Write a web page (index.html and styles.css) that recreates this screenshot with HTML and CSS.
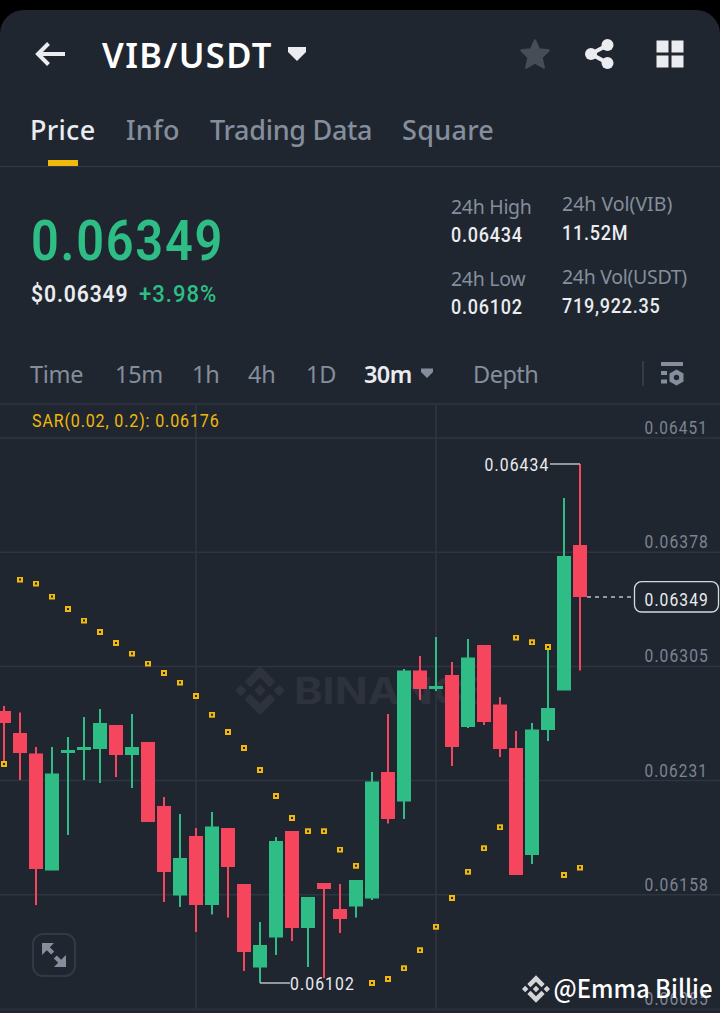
FILE: index.html
```html
<!DOCTYPE html>
<html lang="en">
<head>
<meta charset="utf-8">
<title>VIB/USDT</title>
<link rel="stylesheet" href="styles.css">
</head>
<body>
<main class="screen">
  <header class="topbar">
    <svg class="back" width="32" height="26" viewBox="0 0 32 26"><path d="M31 13H4M14.500 2.500 4 13l10.500 10.500" fill="none" stroke="#eaecef" stroke-width="4"/></svg>
    <h1 class="pair">VIB/USDT</h1>
    <svg class="pair-caret" width="20" height="16" viewBox="0 0 20 16"><path d="M1 1h18v5l-9 9-9-9z" fill="#eaecef"/></svg>
    <div class="actions">
      <svg width="30" height="30" viewBox="0 0 30 30"><path d="M15 1.500 19 10.500 28.500 11.500 21.500 18.500 23.700 28.500 15 23.500 6.300 28.500 8.500 18.500 1.500 11.500 11 10.500Z" fill="#474d57" stroke="#474d57" stroke-width="2.400" stroke-linejoin="round"/></svg>
      <svg width="30" height="32" viewBox="0 0 30 32"><path d="M23.500 7 7 16l16.500 9" fill="none" stroke="#eaecef" stroke-width="4"/><g fill="#eaecef"><circle cx="23.500" cy="7" r="6"/><circle cx="7" cy="16" r="6"/><circle cx="23.500" cy="25" r="6"/></g></svg>
      <svg width="28" height="28" viewBox="0 0 28 28"><path d="M.5.5h12v12H.5zM15.500.5h12v12h-12zM.5 15.500h12v12H.5zM15.500 15.500h12v12h-12z" fill="#eaecef"/></svg>
    </div>
  </header>

  <nav class="tabs">
    <span class="tab tab-price active">Price</span>
    <span class="tab tab-info">Info</span>
    <span class="tab tab-data">Trading Data</span>
    <span class="tab tab-square">Square</span>
  </nav>

  <section class="summary">
    <div class="quote">
      <div class="last">0.06349</div>
      <div class="change"><span class="fiat">$0.06349</span><span class="pct">+3.98%</span></div>
    </div>
    <dl class="stats stats-range">
      <dt class="s-high">24h High</dt><dd>0.06434</dd>
      <dt class="s-low">24h Low</dt><dd>0.06102</dd>
    </dl>
    <dl class="stats stats-volume">
      <dt class="s-vib">24h Vol(VIB)</dt><dd>11.52M</dd>
      <dt class="s-usdt">24h Vol(USDT)</dt><dd>719,922.35</dd>
    </dl>
  </section>

  <nav class="intervals">
    <span class="iv iv-time">Time</span>
    <span class="iv iv-15">15m</span>
    <span class="iv iv-1h">1h</span>
    <span class="iv iv-4h">4h</span>
    <span class="iv iv-1d">1D</span>
    <span class="iv iv-30 selected">30m</span>
    <svg class="iv-caret" width="14" height="11" viewBox="0 0 14 11"><path d="M1 .5h12V4L7 10 1 4z" fill="#848e9c"/></svg>
    <span class="iv iv-depth">Depth</span>
    <svg class="settings" width="24" height="25" viewBox="0 0 24 25"><g fill="#848e9c"><path d="M1 1h22v4H1zM1 10h6v4H1zM1 18.500h6v4H1z"/><path fill-rule="evenodd" d="m16.500 8.500 7 4v8l-7 4-7-4v-8zM16.500 13.800a2.700 2.700 0 1 0 0 5.400 2.700 2.700 0 0 0 0-5.400z"/></g></svg>
  </nav>

  <section class="chart">
    <svg class="plot" width="720" height="610" viewBox="0 403 720 610">
      <defs>
        <marker id="sar" markerUnits="userSpaceOnUse" markerWidth="6" markerHeight="6" refX="3" refY="3"><rect x="1" y="1" width="4" height="4" fill="#202630" stroke="#f0b90b" stroke-width="2"/></marker>
        <g id="diamond"><path d="M0-24.500 15.500-9l-5.700 5.700L0-13.100-9.800-3.300-15.500-9zM0 24.500 15.500 9 9.800 3.300 0 13.100-9.800 3.300-15.500 9zM0-5.700 5.700 0 0 5.700-5.700 0zM-19.300-5.700-13.600 0l-5.700 5.700L-25 0zM19.300-5.700 25 0l-5.700 5.700L13.600 0z"/></g>
      </defs>

      <g fill="#2d323d">
        <use href="#diamond" x="260" y="690.500"/>
        <text class="brand" x="294" y="704" textLength="197" lengthAdjust="spacingAndGlyphs">BINANCE</text>
      </g>

      <path class="grid" d="M0 404H720M196 404V1009M436 404V1009M0 1009.500H720"/>
      <path class="grid thin" d="M0 438H720M0 552.300H720M0 666.500H720M0 780.500H720M0 894.800H720"/>

      <g class="up">
        <path class="wick" d="M52 747V870M68 737V835M84 717V780M100 709V783M132 714V788M180 814V907M212 812V914.500M260 922V983M276 837V955M308 897V967M356 880V917.500M372 772V900M404 669V819M436 637V691M468 639V728M532 723V864M548 648V741M564 498V690"/>
        <path class="body" d="M52 773.500V870.500M68 750V753M84 747V750M100 723V749M132 747V755M180 858V895.500M212 826.500V905M260 945V967.500M276 841V937.500M308 897V928M356 880V906.500M372 781.500V898.500M404 670.500V801.500M436 686V689M468 657.500V727M532 729.500V855M548 708V730M564 556V690.500"/>
      </g>
      <g class="down">
        <path class="wick" d="M4 706V764M20 712.500V780M36 747V905M116 725V777M164 797V902M196 828V932M228 828V917.500M244 884V971M292 831V941M324 883V978M340 884V933M388 714V823.500M420 656V700M452 662V766M484 645V725M500 697V757M516 731V875M580 464V670.500"/>
        <path class="body" d="M4 711V723M20 733V753M36 753.500V869M116 725V755M148 742V822M164 806V872M196 836V905M228 828V867M244 884V952M292 831V928M324 883V889M340 909V919M388 772V819M420 670.500V689M452 675V747M484 645V722M500 704.500V749M516 748V875M580 545V597"/>
      </g>

      <polyline class="sar" points="4,764 20,579.500 36,583.500 52,596.500 68,609 84,620.500 100,632 116,643 132,653.500 148,663.500 164,673 180,682.500 196,696 212,714.700 228,732 244,748 260,770 276,796 292,818 308,831.300 324,831.300 340,849.500 356,865.700 372,983 388,979 404,968.300 420,950.300 436,926.700 452,898 468,871.700 484,848.300 500,827.300 516,637.500 532,642.300 548,647 564,875 580,867.500"/>

      <path d="M550 464H580M260 983H290" stroke="#b7bdc6" stroke-width="1.600"/>
      <path d="M587 597H634" stroke="#b7bdc6" stroke-width="1.500" stroke-dasharray="4 4"/>
      <rect x="634.500" y="581.700" width="84" height="30.300" rx="7" fill="#202630" stroke="#d5d8dd" stroke-width="1.300"/>

      <g class="num axis">
        <text x="644.500" y="434" textLength="63.500" lengthAdjust="spacingAndGlyphs">0.06451</text>
        <text x="644.500" y="548" textLength="64.500" lengthAdjust="spacingAndGlyphs">0.06378</text>
        <text x="644.500" y="662" textLength="64.500" lengthAdjust="spacingAndGlyphs">0.06305</text>
        <text x="644.500" y="777" textLength="63.500" lengthAdjust="spacingAndGlyphs">0.06231</text>
        <text x="644.500" y="891" textLength="64.500" lengthAdjust="spacingAndGlyphs">0.06158</text>
        <text x="644.500" y="1005" textLength="64.500" lengthAdjust="spacingAndGlyphs">0.06085</text>
      </g>
      <g class="num mark">
        <text x="644.500" y="606" textLength="64.500" lengthAdjust="spacingAndGlyphs">0.06349</text>
        <text x="484.500" y="471" textLength="65" lengthAdjust="spacingAndGlyphs">0.06434</text>
        <text x="290" y="990" textLength="65" lengthAdjust="spacingAndGlyphs">0.06102</text>
      </g>
      <text class="num legend" x="32" y="427" textLength="187.500" lengthAdjust="spacingAndGlyphs">SAR(0.02, 0.2): 0.06176</text>

      <rect x="33" y="934" width="42" height="42" rx="10" fill="none" stroke="#333944" stroke-width="2"/>
      <path d="M42 943h12l-4.200 4.200 4.400 4.400-3 3-4.400-4.400L42 955zM66 967H54l4.200-4.200-4.400-4.400 3-3 4.400 4.400L66 955z" fill="#848e9c"/>

      <use href="#diamond" fill="#d5d5d8" transform="translate(536 989) scale(.56)"/>
      <text class="author" x="553.500" y="998" textLength="159" lengthAdjust="spacingAndGlyphs">@Emma Billie</text>
    </svg>
  </section>
</main>
</body>
</html>
```

FILE: styles.css
```css
* { box-sizing: border-box; margin: 0; }
body { background: #000; padding-top: 10px; width: 720px; font-family: "Noto Sans", sans-serif; }
svg { display: block; flex: none; }
.screen { height: 1003px; overflow: hidden; background: #202630; border-radius: 24px 24px 0 0; }

.topbar { display: flex; align-items: center; height: 88px; padding-left: 34px; }
.pair { width: 184px; margin-left: 36px; padding-top: 2px; color: #fff; font-size: 34.5px; font-weight: 600; line-height: 50px; letter-spacing: 1.4px; white-space: nowrap; }
.pair-caret { margin-left: 1px; }
.actions { display: flex; align-items: center; margin-left: 213px; }
.actions svg + svg { margin-left: 34px; }
.actions svg:last-child { margin-left: 42px; }

.tabs { display: flex; height: 69px; padding: 11px 0 0 30px; border-bottom: 1px solid #333b47; color: #848e9c; font-size: 27px; font-weight: 500; line-height: 42px; white-space: nowrap; }
.tab { position: relative; letter-spacing: .3px; }
.tab-price { width: 96px; }
.tab-info { width: 84px; }
.tab-data { width: 192px; letter-spacing: -.3px; }
.active { color: #eaecef; }
.active::after { content: ""; position: absolute; left: 18px; bottom: 0; width: 30px; height: 6px; background: #f0b90b; }

.summary { display: flex; height: 175px; font-size: 19.5px; }
.quote { width: 451px; padding: 40px 0 0 31px; font-family: Roboto, sans-serif; }
.last { color: #2ebd85; font-size: 56px; font-weight: 600; line-height: 68px; letter-spacing: 2px; transform: scaleX(.87); transform-origin: left; }
.change { display: flex; font-size: 24px; line-height: 38px; }
.change span { transform-origin: left; }
.fiat { width: 108px; color: #eaecef; font-weight: 600; letter-spacing: 1px; transform: scaleX(.88); }
.pct { color: #2ebd85; font-weight: 500; letter-spacing: 1.1px; transform: scaleX(.92); }
.stats { line-height: 28px; white-space: nowrap; }
.stats-range { width: 111px; padding-top: 26px; }
.stats-volume { padding-top: 23px; }
.stats dt { color: #848e9c; }
.stats dd { margin-bottom: 16px; color: #eaecef; font-family: Roboto, sans-serif; font-size: 20px; font-weight: 500; letter-spacing: .85px; transform: scaleX(.9); transform-origin: left; }
.stats-range dt, .s-usdt { letter-spacing: -.3px; }
.stats-volume dd { line-height: 30px; margin-bottom: 15px; }

.intervals { display: flex; align-items: center; height: 61px; padding: 2px 0 0 30px; color: #848e9c; font-size: 23.5px; letter-spacing: -.3px; white-space: nowrap; }
.iv-time { width: 85px; }
.iv-15 { width: 77px; }
.iv-1h { width: 56px; }
.iv-4h { width: 58px; }
.iv-1d { width: 58px; }
.iv-30 { width: 56px; }
.selected { color: #eaecef; font-weight: 600; letter-spacing: -.6px; }
.iv-depth { width: 169px; margin-left: 39px; letter-spacing: -.5px; }
.settings { box-sizing: content-box; padding-left: 16px; border-left: 2px solid #333b47; }

.plot { font-family: "Noto Sans", sans-serif; }
.grid { fill: none; stroke: #2b313c; stroke-width: 2; }
.thin { stroke-width: 1.4; stroke: #2f3540; }
.up { stroke: #2ebd85; }
.down { stroke: #f6465d; }
.wick { stroke-width: 2; }
.body { stroke-width: 14; }
.sar { fill: none; marker: url(#sar); }
.num { font-family: Roboto, sans-serif; font-size: 18.5px; letter-spacing: 1.3px; }
.axis { fill: #7c8493; }
.mark { fill: #eaecef; }
.legend { fill: #f0b90b; letter-spacing: 1px; }
.brand { font-family: Inter, sans-serif; font-weight: 700; font-size: 37px; }
.author { fill: #fff; font-size: 25px; font-weight: 500; font-family: "Noto Sans CJK SC", "Noto Sans", sans-serif; }
```
